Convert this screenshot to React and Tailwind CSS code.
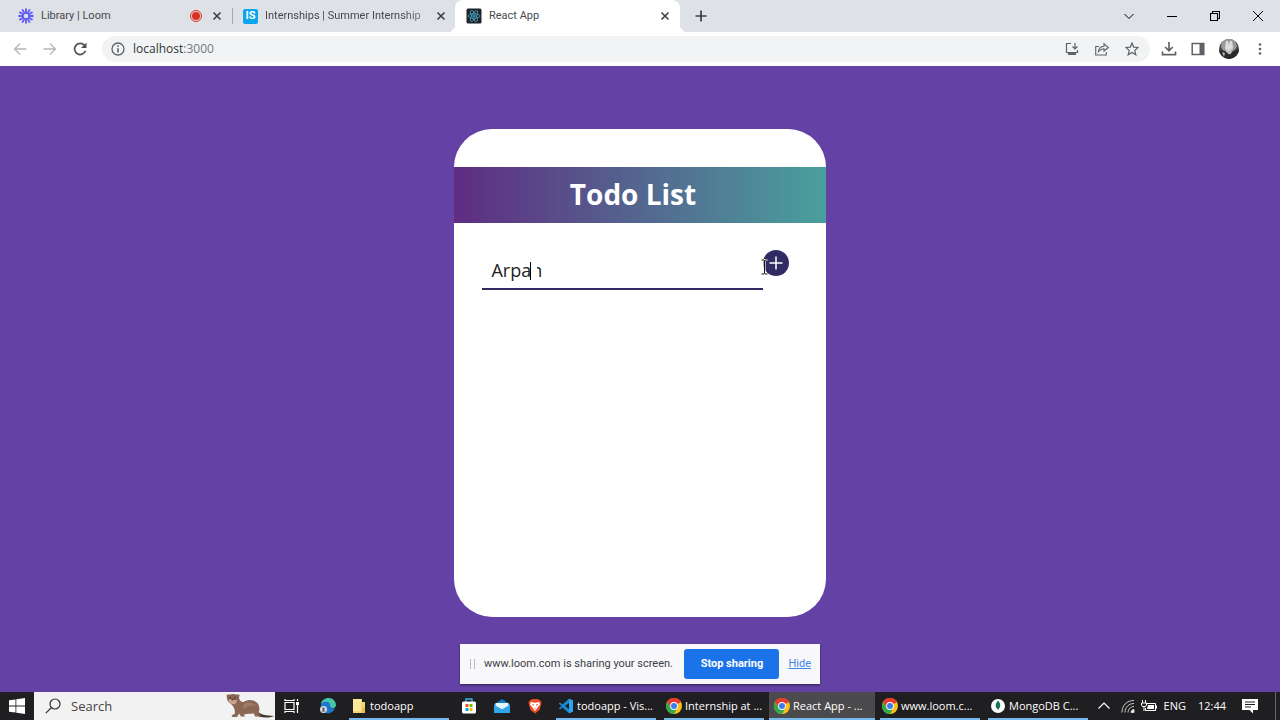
import React, { useState } from 'react'

const ChromeIcon = () => (
  <svg viewBox="0 0 16 16" className="size-4 shrink-0">
    <circle cx="8" cy="8" r="8" fill="#fbc116" />
    <path d="M8 8 L1.1 4 A8 8 0 0 1 14.9 4 Z" fill="#e33b2e" />
    <path d="M8 4.2 H15 A8 8 0 0 0 1.1 4 L4.8 10 Z" fill="#e33b2e" />
    <path d="M1.1 4 A8 8 0 0 0 8 16 L11.4 9.8 L4.7 10 Z" fill="#2da94f" />
    <circle cx="8" cy="8" r="3.9" fill="#fff" />
    <circle cx="8" cy="8" r="3" fill="#3b7ded" />
  </svg>
)

const LoomIcon = () => (
  <svg viewBox="0 0 16 16" className="size-4 shrink-0" stroke="#625df5" strokeWidth="1.9" fill="none">
    <circle cx="8" cy="8" r="3.3" strokeWidth="2" />
    <path d="M8 .4V4M8 12v3.6M.4 8H4M12 8h3.6M4.2 1.4 6 4.6M10 11.4l1.8 3.2M1.4 4.2l3.2 1.8M11.4 10l3.2 1.8M1.4 11.8 4.6 10M11.4 6l3.2-1.8M4.2 14.6 6 11.4M10 4.6l1.8-3.2" />
  </svg>
)

const InternshalaIcon = () => (
  <span className="flex size-[15px] shrink-0 items-center justify-center rounded-xs bg-[#0ba5ec] text-[11px] font-bold text-white">IS</span>
)

const ReactIcon = () => (
  <svg viewBox="0 0 16 16" className="size-4 shrink-0" fill="none" stroke="#3f9db5" strokeWidth=".9">
    <rect x=".5" y=".5" width="15" height="15" rx="1.5" fill="#20232a" stroke="none" />
    <ellipse cx="8" cy="8" rx="6" ry="2.3" />
    <ellipse cx="8" cy="8" rx="6" ry="2.3" transform="rotate(60 8 8)" />
    <ellipse cx="8" cy="8" rx="6" ry="2.3" transform="rotate(120 8 8)" />
    <circle cx="8" cy="8" r="1" fill="#3f9db5" />
  </svg>
)

const CloseIcon = () => (
  <svg viewBox="0 0 10 10" className="size-[10px]" stroke="#3c4043" strokeWidth="1.6">
    <path d="M1.5 1.5l7 7M8.5 1.5l-7 7" />
  </svg>
)

function TabStrip() {
  return (
    <header className="flex h-8 shrink-0 items-center bg-[#dee1e6] font-[Roboto,sans-serif] text-[11px] text-[#45494d]">
      <div className="flex w-[232px] items-center pl-[18px] pr-[10px]">
        <LoomIcon />
        <span className="ml-[7px] flex-1 whitespace-nowrap">Library | Loom</span>
        <span className="mr-[10px] flex size-3 items-center justify-center rounded-full border border-[#d93025]">
          <span className="size-2 rounded-full bg-[#d93025]" />
        </span>
        <button aria-label="Close tab"><CloseIcon /></button>
      </div>
      <div className="flex w-[223px] items-center border-l border-[#a5a8ad] pl-[10px] pr-[9px]">
        <InternshalaIcon />
        <span className="ml-[7px] mr-[11px] flex-1 whitespace-nowrap mask-r-from-85% mask-r-to-120%">Internships | Summer Internship</span>
        <button aria-label="Close tab"><CloseIcon /></button>
      </div>
      <div className="relative flex h-8 w-[225px] items-center rounded-t-lg bg-white pl-[11px] pr-[10px] before:absolute before:bottom-0 before:-left-2 before:size-2 before:rounded-br-lg before:shadow-[4px_4px_0_white] after:absolute after:-right-2 after:bottom-0 after:size-2 after:rounded-bl-lg after:shadow-[-4px_4px_0_white]">
        <ReactIcon />
        <span className="ml-[7px] flex-1">React App</span>
        <button aria-label="Close tab"><CloseIcon /></button>
      </div>
      <button aria-label="New tab" className="ml-[15px]">
        <svg viewBox="0 0 12 12" className="size-3" stroke="#3c4043" strokeWidth="1.7"><path d="M6 .5v11M.5 6h11" /></svg>
      </button>
      <div className="ml-auto flex h-[27px] pr-px text-black">
        <button aria-label="Search tabs" className="flex w-[43px] items-center justify-center">
          <svg viewBox="0 0 10 10" className="size-[10px]" fill="none" stroke="currentColor"><path d="M.5 3 5 7.5 9.500 3" /></svg>
        </button>
        <button aria-label="Minimize" className="flex w-[43px] items-center justify-center">
          <svg viewBox="0 0 10 10" className="size-[10px]" stroke="currentColor"><path d="M0 5.500h10" /></svg>
        </button>
        <button aria-label="Restore" className="flex w-[43px] items-center justify-center">
          <svg viewBox="0 0 10 10" className="size-[10px]" fill="none" stroke="currentColor" strokeWidth="1.1"><path d="M.5 2.500h7v7h-7zM2.500 2.500v-2h7v7h-2" /></svg>
        </button>
        <button aria-label="Close" className="flex w-[43px] items-center justify-center">
          <svg viewBox="0 0 10 10" className="size-[10px]" stroke="currentColor"><path d="M0 0l10 10M10 0 0 10" /></svg>
        </button>
      </div>
    </header>
  )
}

function Toolbar() {
  return (
    <div className="flex h-[34px] shrink-0 items-center bg-white pl-[13px] pr-[13px] text-[#5f6368]">
      <button aria-label="Back" className="mr-4">
        <svg viewBox="0 0 14 14" className="size-[14px]" fill="none" stroke="#b5b7ba" strokeWidth="1.3"><path d="M13.500 7H1.500M7 1.500 1.500 7 7 12.500" /></svg>
      </button>
      <button aria-label="Forward" className="mr-4">
        <svg viewBox="0 0 14 14" className="size-[14px]" fill="none" stroke="#b5b7ba" strokeWidth="1.3"><path d="M.5 7h12M7 1.500 12.500 7 7 12.500" /></svg>
      </button>
      <button aria-label="Reload" className="mr-[15px]">
        <svg viewBox="0 0 14 14" className="size-[14px]" fill="none" stroke="#505357" strokeWidth="1.7"><path d="M12.500 8.800A5.600 5.600 0 1 1 11.500 3.300l1 1" /><path d="M13.500.5v5.500H8z" fill="#505357" stroke="none" /></svg>
      </button>
      <div className="flex h-[26px] flex-1 items-center rounded-full bg-[#f1f3f4] pl-[9px] pr-[11px]">
        <svg viewBox="0 0 14 14" className="size-[14px] shrink-0" fill="none" stroke="currentColor" strokeWidth="1.3"><circle cx="7" cy="7" r="6" /><path d="M7 6.200v4.300M7 3.300v1.500" strokeWidth="1.6" /></svg>
        <div className="ml-2 flex-1 text-[12px] text-[#303337]">localhost<span className="text-[#75797d]">:3000</span></div>
        <div className="flex gap-4">
          <button aria-label="Install app">
            <svg viewBox="0 0 14 14" className="size-[14px]" fill="none" stroke="currentColor" strokeWidth="1.2"><path d="M6 1.500H1.500v9h11V8M10 1v5.500M7.500 4.500 10 7l2.500-2.500" /><path d="M3 10.500h8v2.500H3z" fill="currentColor" stroke="none" /></svg>
          </button>
          <button aria-label="Share">
            <svg viewBox="0 0 14 14" className="size-[14px]" fill="none" stroke="currentColor" strokeWidth="1.1"><path d="M4 4.500H.7v8.500h10.600v-3M3.500 9.500c.3-3 2-5 5.500-5.200V1.800L13.300 5.500 9 9V6.700c-2.500 0-4 .8-5.500 2.800z" /></svg>
          </button>
          <button aria-label="Bookmark">
            <svg viewBox="0 0 14 14" className="size-[14px]" fill="none" stroke="currentColor" strokeWidth="1.2"><path d="M7 1l1.700 4.100 4.500.4-3.400 2.900 1 4.400L7 10.500l-3.800 2.300 1-4.400L.8 5.500l4.500-.4z" /></svg>
          </button>
        </div>
      </div>
      <div className="ml-[11px] flex items-center gap-[14px]">
        <button aria-label="Downloads">
          <svg viewBox="0 0 16 16" className="size-4" fill="none" stroke="currentColor" strokeWidth="1.7"><path d="M8 1v8.500M4.200 6 8 9.800 11.800 6M1.500 10.500v3.200h13v-3.200" /></svg>
        </button>
        <button aria-label="Side panel">
          <svg viewBox="0 0 14 14" className="size-[14px]" fill="none" stroke="currentColor" strokeWidth="1.5"><path d="M1.200 1.500h11.600v11H1.200z" /><path d="M8.500 1.500h4.500v11H8.500z" fill="currentColor" stroke="none" /></svg>
        </button>
        <button aria-label="Profile">
          <svg viewBox="0 0 20 20" className="size-5 rounded-full">
            <rect width="20" height="20" fill="#4a4a4c" />
            <path d="M3 0h12l3 7-4 7H6L2 8z" fill="#9b9b9d" />
            <path d="M7 2h2l1 4 1-4h2l1 7-2 4H8L6 9z" fill="#deddde" />
            <path d="M0 11l6 1 4 4 4-4 6-2v10H0z" fill="#29292b" />
            <path d="M8 10l2 2 3-3-1 6H9zM3 13l3 1-1 4z" fill="#bcbcbd" />
          </svg>
        </button>
        <button aria-label="Menu">
          <svg viewBox="0 0 14 14" className="size-[14px]" fill="currentColor"><circle cx="7" cy="2.500" r="1.300" /><circle cx="7" cy="7" r="1.300" /><circle cx="7" cy="11.500" r="1.300" /></svg>
        </button>
      </div>
    </div>
  )
}

function TodoCard() {
  const [item, setItem] = useState('Arpan')

  return (
    <main className="min-h-[488px] w-[29%] min-w-[320px] rounded-[38px] bg-white pt-[38px]">
      <h1 className="flex h-14 items-center justify-center bg-[linear-gradient(to_right,#5f2c82,#49a09d)] pb-[2px] pr-[14px] text-[28px] font-bold text-white">
        Todo List
      </h1>
      <form className="flex items-start pl-7 pr-[37px] pt-[27px]" onSubmit={e => e.preventDefault()}>
        <div className="relative min-w-0 flex-1">
          <input
            aria-label="Todo item"
            className="h-10 w-full border-b-2 border-[#302b63] pl-[9px] pt-[2px] text-[18px] text-[#222] outline-none"
            value={item}
            onChange={e => setItem(e.target.value)}
          />
          {/* caret */}
          <span className="absolute left-12 top-3 h-[18px] w-[7px] border-l border-black bg-white" />
        </div>
        <div className="relative">
          <button aria-label="Add" className="flex size-[26px] items-center justify-center rounded-full bg-[#302b63]">
            <svg viewBox="0 0 14 14" className="size-[14px]" stroke="#fff" strokeWidth="1.5"><path d="M7 .5v13M.5 7h13" /></svg>
          </button>
          {/* mouse pointer */}
          <svg viewBox="0 0 7 16" className="absolute -left-[2px] top-[9px] h-4 w-[7px]" fill="none">
            <path d="M.5 1H3l.5.500L4 1h2.500M3.500 1.500v13M.5 15H3l.5-.5.5.5h2.500" stroke="#fff" strokeWidth="2.200" />
            <path d="M.5 1H3l.5.500L4 1h2.500M3.500 1.500v13M.5 15H3l.5-.5.5.5h2.500" stroke="#111" />
          </svg>
        </div>
      </form>
    </main>
  )
}

function ShareBar() {
  return (
    <div className="absolute bottom-2 left-1/2 flex h-10 w-[360px] -translate-x-1/2 items-center bg-[#f8f8fb] pl-[10px] pr-[9px] font-[Roboto,sans-serif] text-[11px] text-[#3c4043] shadow-[0_1px_2px_#0008]">
      <span className="h-[10px] w-[5px] border-x border-[#b9bbbf]" />
      <span className="ml-[9px] flex-1 whitespace-nowrap">www.loom.com is sharing your screen.</span>
      <button className="h-[30px] w-[95px] rounded-[3px] bg-[#1a73e8] font-bold text-white">Stop sharing</button>
      <a href="#hide" className="ml-[9px] text-[#4285e8] underline">Hide</a>
    </div>
  )
}

function TaskButton({ icon, label, active }) {
  return (
    <button className={`h-7 w-[106px] text-white ${active ? 'bg-[#4b4a4c]' : 'px-[3px]'}`}>
      <span className={`flex h-7 items-center gap-[3px] border-b-2 border-[#76b9ed] pt-[2px] ${active ? 'pl-[5px]' : 'pl-[2px]'}`}>
        {icon}
        <span className="whitespace-nowrap">{label}</span>
      </span>
    </button>
  )
}

const FolderIcon = () => (
  <svg viewBox="0 0 16 16" className="size-4 shrink-0"><path d="M2 1h9v3h3v11H2z" fill="#f6d673" /><path d="M2 1h8v12H2z" fill="#ffe79b" /><path d="M11 10l3-1v6h-3z" fill="#e9bd4d" /></svg>
)

const VsCodeIcon = () => (
  <svg viewBox="0 0 16 16" className="size-4 shrink-0"><path d="M11 .8 15 2.600v10.800l-4 1.800-6.500-5.700L2 11.500.8 10.500 3.500 8 .8 5.500 2 4.500l2.500 2z M11 4.800 7 8l4 3.200z" fill="#168bd2" fillRule="evenodd" /><path d="M11 .8 15 2.600v10.800l-4 1.800z" fill="#2aa6ef" /></svg>
)

const MongoIcon = () => (
  <svg viewBox="0 0 16 16" className="size-4 shrink-0"><circle cx="8" cy="8" r="7" fill="#fff" /><path d="M8 2.500c3.500 4 2.500 7 .3 8.800L8 13.300l-.3-2C5.500 9.500 4.500 6.500 8 2.500z" fill="#14734b" /></svg>
)

function Taskbar() {
  return (
    <footer className="flex h-7 shrink-0 items-center bg-[#1f1e20] text-[11px] text-white">
      <button aria-label="Start" className="flex w-[34px] justify-center">
        <svg viewBox="0 0 16 16" className="size-4" fill="#fff"><path d="M0 2.300l6.500-.9v6.100H0zM7.300 1.300 16 0v7.500H7.300zM0 8.400h6.500v6.200L0 13.700zM7.300 8.400H16V16l-8.700-1.200z" /></svg>
      </button>
      <div className="flex h-7 w-[241px] items-center bg-[#f2f2f2] pl-[11px] text-[#333]">
        <svg viewBox="0 0 16 16" className="size-4 shrink-0" fill="none" stroke="#333" strokeWidth="1.200"><circle cx="10" cy="6" r="5" /><path d="M6.500 9.500.8 15.200" /></svg>
        <input aria-label="Search" placeholder="Search" className="ml-[10px] w-0 flex-1 pt-[2px] text-[13px] outline-none placeholder:text-[#444]" />
        <svg viewBox="0 0 50 26" className="h-[26px] w-[50px] shrink-0">
          <path d="M33 19c4 3 8 3.500 16 4-6 2.500-15 2-19-2z" fill="#44342f" />
          <path d="M2 4C1 2 2 .8 4 1.800c2.500-1.200 6-1.200 8 0C14 .8 15.500 2 14 4c0 3 2 5 4.500 5C24 5 32 7 34 13c1 4 0 6-1 7l3 2-1 1.500h-5l-1-3-8 .5-2 .5 1 2h-4l-2-3-2 3.500H7.500l-1-1.500 3.500-2C10 15 8 13 6 11 3 9 1.500 7 2 4z" fill="#8a6654" />
          <path d="M4 6c3 0 4 2 8 1 0 4-3 5-5 4C4 10 3 8 4 6z" fill="#c9a58d" />
          <path d="M18 12c4-4 10-3 13 1-5-1-9 0-12 3z" fill="#a07a66" />
          <path d="M4.500 4.300h1.500v1H4.500zM9 4.300h1.500v1H9zM6 6.300h2.500L7.300 7.500z" fill="#211b1a" />
        </svg>
      </div>
      <button aria-label="Task view" className="ml-[9px]">
        <svg viewBox="0 0 16 16" className="size-4" fill="none" stroke="#fff" strokeWidth="1.200"><path d="M1 4.500h9v7H1zM1 1v1.500h9V1M1 15v-1.500h9V15M13.500 1v2M13.500 7v8" /><path d="M12 4h3v3h-3z" fill="#fff" stroke="none" /></svg>
      </button>
      <button aria-label="Microsoft Edge" className="ml-5">
        <svg viewBox="0 0 16 16" className="size-4"><path d="M1 7C1 2 5 0 8.500 0 13 0 16 3.500 16 7c0 4-6 4-6 1 0-5-7-5-9-1z" fill="#43c7a8" /><path d="M1 7c2-5 10-4 9 1 0 2 2 3 5 2-2 5-7 7-11 4C1 12 0 10 1 7z" fill="#1976d2" /><circle cx="3.500" cy="11.500" r="3.500" fill="#d8dadd" /><circle cx="3.500" cy="10.700" r="1.200" fill="#555" /><path d="M1.500 13.500c1-2 3-2 4 0z" fill="#555" /></svg>
      </button>
      <div className="ml-[10px]"><TaskButton icon={<FolderIcon />} label="todoapp" /></div>
      <div className="ml-[9px] flex gap-[17px]">
        <button aria-label="Microsoft Store">
          <svg viewBox="0 0 16 16" className="size-4"><path d="M5 4V1h6v3" fill="none" stroke="#36b5ed" strokeWidth="1.300" /><rect x="1" y="3.500" width="14" height="12" rx="1.500" fill="#fff" /><path d="M4.500 6h3v3h-3z" fill="#f25022" /><path d="M8.500 6h3v3h-3z" fill="#7fba00" /><path d="M4.500 10h3v3h-3z" fill="#00a4ef" /><path d="M8.500 10h3v3h-3z" fill="#ffb900" /></svg>
        </button>
        <button aria-label="Mail">
          <svg viewBox="0 0 16 16" className="size-4"><path d="M0 6.500 8 1l8 5.500V15H0z" fill="#1378c8" /><path d="M1.500 5h13v3L8 11.500 1.500 8z" fill="#e5f5ff" /><path d="M0 7l8 4.500L16 7v8H0z" fill="#2fa6e9" /></svg>
        </button>
        <button aria-label="Brave">
          <svg viewBox="0 0 16 16" className="size-4"><path d="M5 1h6l1.500 1.300L14 3l.5 2-2 7L8 15.500 3.500 12l-2-7L2 3l1.500-.7z" fill="#f04c23" /><path d="M4 4l4 .7L12 4l1 2.500-2.500 3.300L8 13l-2.500-3.200L3 6.500z" fill="#fff" /><path d="M4.700 6l2.300.5-.5 1.500zM11.300 6 9 6.500l.5 1.500zM7 10h2l-1 1z" fill="#f04c23" /></svg>
        </button>
      </div>
      <div className="ml-[10px] flex gap-[2px]">
        <TaskButton icon={<VsCodeIcon />} label="todoapp - Vis..." />
        <TaskButton icon={<ChromeIcon />} label="Internship at ..." />
        <TaskButton icon={<ChromeIcon />} label="React App - ..." active />
        <TaskButton icon={<ChromeIcon />} label="www.loom.c..." />
        <TaskButton icon={<MongoIcon />} label="MongoDB C..." />
      </div>
      <div className="ml-auto flex h-7 items-center">
        <button aria-label="Hidden icons" className="mr-[11px]">
          <svg viewBox="0 0 12 12" className="size-3" fill="none" stroke="#fff" strokeWidth="1.200"><path d="M.5 8.500 6 3l5.500 5.500" /></svg>
        </button>
        <svg viewBox="0 0 14 14" className="mr-[6px] size-[14px]" fill="none" stroke="#ccc"><path d="M1 13.500C1 6 6 1.500 13 1.500M4 13.500C4 8 8 4.500 13 4.500M7 13.500c0-3.500 3-6 6-6" /><path d="M10 13.500c0-2 1.500-3 3-3v3z" fill="#fff" /></svg>
        <svg viewBox="0 0 16 14" className="mr-[7px] h-[14px] w-4" fill="none" stroke="#fff"><path d="M6 4.500h8.500v7h-10V9M15.500 6.500v3M1.500 1v3M4.500 1v3M.5 4h5v2l-1 1.500h-3L.5 6zM3 8v4" /><path d="M7 6h6v4H6z" fill="#fff" stroke="none" /></svg>
        <span className="mr-3">ENG</span>
        <span className="mr-4">12:44</span>
        <button aria-label="Notifications" className="mr-[17px]">
          <svg viewBox="0 0 16 16" className="size-4"><path d="M0 1h16v11h-5v3.500L7.500 12H0z" fill="#fff" /><path d="M3 4h10M3 6.500h10M3 9h6" stroke="#1f1e20" /></svg>
        </button>
        <span className="mr-1 h-7 border-l border-[#666]" />
      </div>
    </footer>
  )
}

export default function App() {
  return (
    <div className="flex min-h-screen flex-col font-['Open_Sans','Noto_Sans',sans-serif]">
      <TabStrip />
      <Toolbar />
      <div className="relative flex flex-1 items-start justify-center bg-[#6441a5] pb-[75px] pt-[63px]">
        <TodoCard />
        <ShareBar />
      </div>
      <Taskbar />
    </div>
  )
}
